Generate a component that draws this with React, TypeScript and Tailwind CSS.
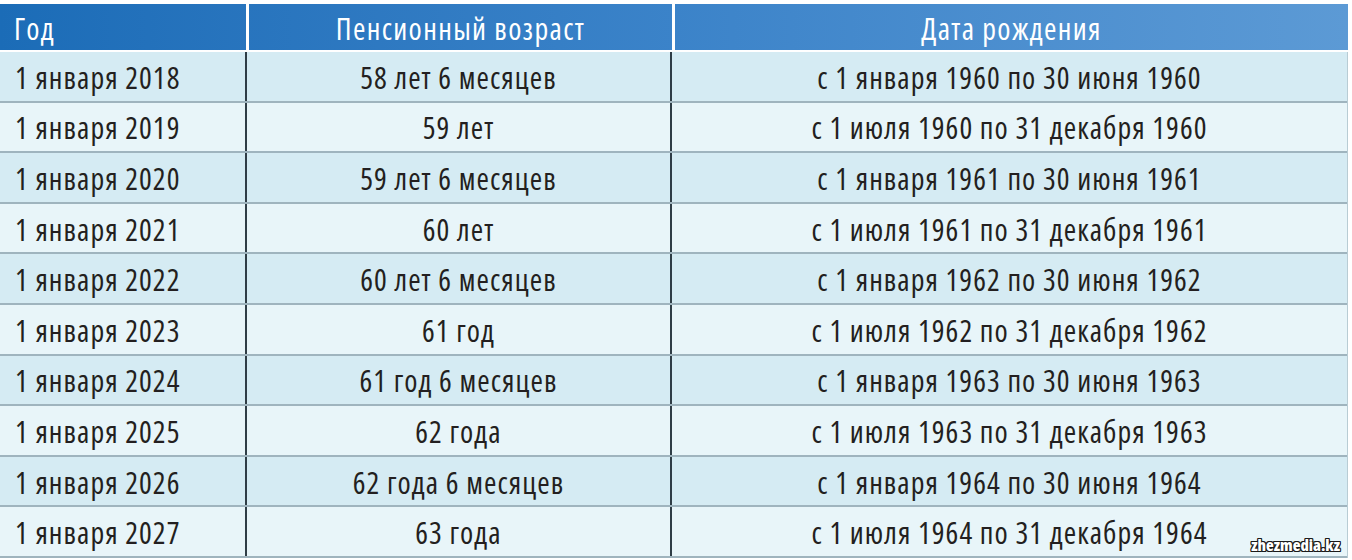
const rows = [
  ['1 января 2018', '58 лет 6 месяцев', 'с 1 января 1960 по 30 июня 1960'],
  ['1 января 2019', '59 лет', 'с 1 июля 1960 по 31 декабря 1960'],
  ['1 января 2020', '59 лет 6 месяцев', 'с 1 января 1961 по 30 июня 1961'],
  ['1 января 2021', '60 лет', 'с 1 июля 1961 по 31 декабря 1961'],
  ['1 января 2022', '60 лет 6 месяцев', 'с 1 января 1962 по 30 июня 1962'],
  ['1 января 2023', '61 год', 'с 1 июля 1962 по 31 декабря 1962'],
  ['1 января 2024', '61 год 6 месяцев', 'с 1 января 1963 по 30 июня 1963'],
  ['1 января 2025', '62 года', 'с 1 июля 1963 по 31 декабря 1963'],
  ['1 января 2026', '62 года 6 месяцев', 'с 1 января 1964 по 30 июня 1964'],
  ['1 января 2027', '63 года', 'с 1 июля 1964 по 31 декабря 1964'],
]

export default function App() {
  return (
    <div
      className="relative w-[1352px] h-[560px] bg-white pt-[4px] overflow-hidden"
      style={{ fontFamily: '"Open Sans", "Noto Sans", sans-serif' }}
    >
      <div className="w-[1348px]">
        {/* Header */}
        <div className="flex h-[46px] bg-gradient-to-r from-[#1b6cb7] via-[#3b83c9] to-[#5c9ad5] text-white text-[30px] leading-none tracking-[0.045em] [font-stretch:86%]">
          <div className="w-[246px] flex items-center pl-[14px] pt-[3px]">Год</div>
          <div className="w-[3px] bg-white" />
          <div className="w-[423px] flex items-center justify-center pt-[3px]">Пенсионный возраст</div>
          <div className="w-[3px] bg-white" />
          <div className="flex-1 flex items-center justify-center pt-[3px]">Дата рождения</div>
        </div>
        <div className="h-[2px] bg-white" />

        {/* Body */}
        <div className="border-r border-[#b8ccd4]">
          {rows.map((r, i) => (
            <div
              key={i}
              className={`flex h-[50.6px] border-b-2 border-[#9fb4be] text-[#231f20] text-[30px] leading-none tracking-[0.035em] [font-stretch:86%] ${
                i % 2 === 0 ? 'bg-[#d5ebf3]' : 'bg-[#e8f5f9]'
              }`}
            >
              <div className="w-[247px] flex items-center pl-[15px] pt-[3px] border-r-2 border-[#2f3d46]">{r[0]}</div>
              <div className="w-[425px] flex items-center justify-center pt-[3px] border-r-2 border-[#2f3d46]">{r[1]}</div>
              <div className="flex-1 flex items-center justify-center pt-[3px]">{r[2]}</div>
            </div>
          ))}
        </div>
      </div>

      {/* Watermark */}
      <div
        className="absolute right-[12px] bottom-[7px] text-[16px] font-extrabold text-white leading-none [font-stretch:82%]"
        style={{
          textShadow:
            '1px 0 0 #1a1a1a, -1px 0 0 #1a1a1a, 0 1px 0 #1a1a1a, 0 -1px 0 #1a1a1a, 1px 1px 0 #1a1a1a, -1px -1px 0 #1a1a1a, 1px -1px 0 #1a1a1a, -1px 1px 0 #1a1a1a',
        }}
      >
        zhezmedia.kz
      </div>
    </div>
  )
}
